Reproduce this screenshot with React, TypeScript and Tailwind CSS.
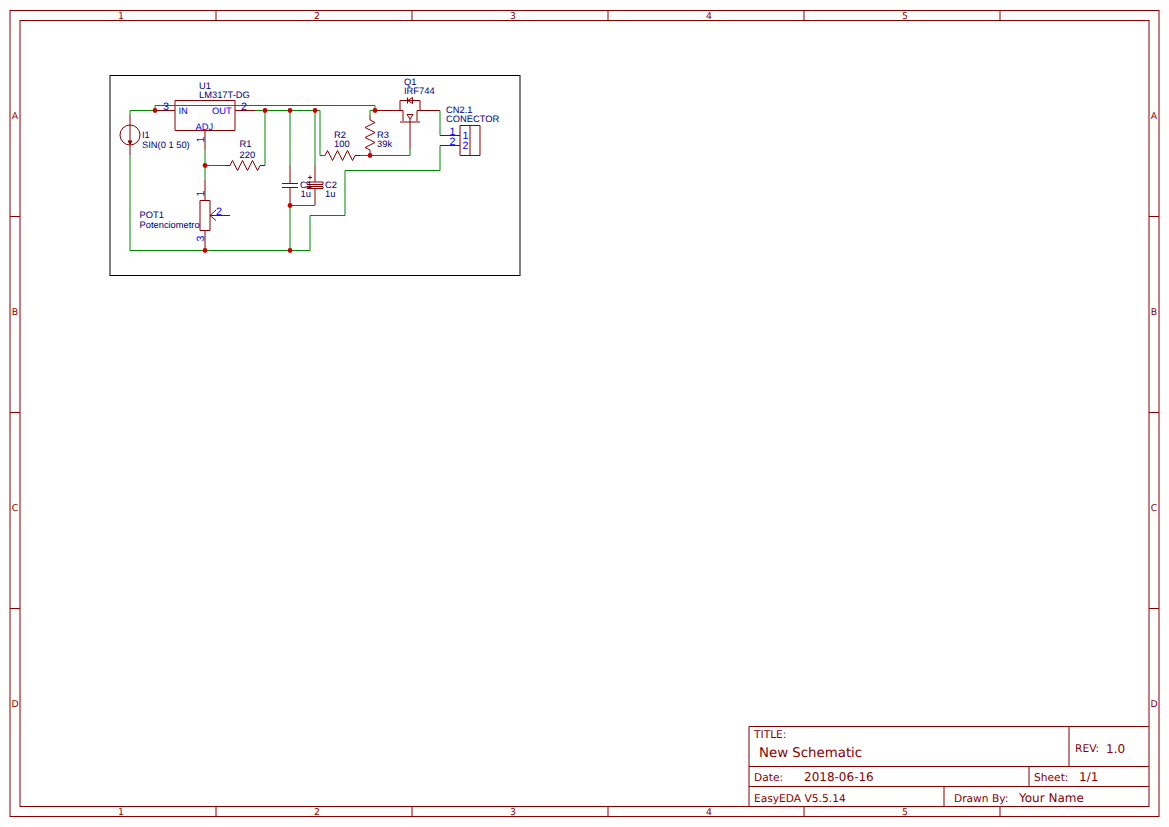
const wires = [
  'M130,115 V110.5 H155',
  'M155,110 V105.5 H375 V110',
  'M255,110.5 H315',
  'M130,155 V250.5 H310 V215.5 H345 V170.5 H440 V145.5',
  'M265,110.5 V165.5',
  'M205,150 V180',
  'M205,165.5 H225',
  'M290,110.5 V165',
  'M290,205 V250',
  'M290,205.5 H315',
  'M315,110.5 V165',
  'M315,110.5 H320 V155.5 H325',
  'M360,155.5 H410 V150',
  'M375,110.5 H370 V115',
  'M440,110.5 V135.5',
]

const parts = [
  // current source
  'M130,115 V155',
  // U1
  'M155,110.5 H175',
  'M235,110.5 H255',
  'M205,130 V150',
  'M175,100.5 H235 V130.5 H175 Z',
  // R1, R2, R3
  'M225,165.5 H230 L232.5,160.5 L237.5,170.5 L242.5,160.5 L247.5,170.5 L252.5,160.5 L257.5,170.5 L260,165.5 H265',
  'M320,155.5 H325 L327.5,150.5 L332.5,160.5 L337.5,150.5 L342.5,160.5 L347.5,150.5 L352.5,160.5 L355,155.5 H360',
  'M370,115 V120 L375,122.5 L365,127.5 L375,132.5 L365,137.5 L375,142.5 L365,147.5 L370,150 V155',
  // POT1
  'M205,180 V200',
  'M205,230 V250',
  'M200,200.5 H210 V230.5 H200 Z',
  'M230,215.5 H210 M216,210 L210,215.5 L216,220.5',
  // C1
  'M290,165 V183.5 M290,187.5 V205',
  'M282,183.5 H298 M282,187.5 H298',
  // C2
  'M315,165 V182 M315,188.5 V205',
  'M307,182 H323 V184.5 H307 Z M307,186.5 H323 V188.5 H307 Z',
  'M308,177.5 H312 M310,175.5 V179.5',
  // Q1
  'M375,110.5 H403 V121 M417,121 V110.5 H440',
  'M400,110.5 V100.5 H420 V110.5',
  'M400,122 H420',
  'M407,114.5 H413 L410,119 Z M410,119 V122 M410,122 V150',
  'M407.5,97.5 V103.5 M407.5,100.5 L412.5,97.5 V103.5 Z',
  // connector
  'M440,135.5 H460 M440,145.5 H460',
  'M460,125.5 H480 V155.5 H460 Z M470,125.5 V155.5',
]

const junctions = [
  [155, 110.5], [265, 110.5], [290, 110.5], [315, 110.5], [375, 110.5],
  [205, 165.5], [370, 155.5], [290, 205.5], [205, 250.5], [290, 250.5],
]

const labels: [string, number, number][] = [
  ['U1', 199, 89], ['LM317T-DG', 199, 98],
  ['I1', 142, 138], ['SIN(0 1 50)', 142, 148],
  ['R1', 239.5, 147], ['220', 239.5, 158],
  ['POT1', 139.5, 218], ['Potenciometro', 139.5, 228],
  ['C1', 300, 188], ['1u', 300.5, 197],
  ['C2', 325, 188], ['1u', 325, 197],
  ['R2', 334, 138], ['100', 334, 147],
  ['R3', 377, 138], ['39k', 377, 147],
  ['Q1', 404, 85], ['IRF744', 404, 94],
  ['CN2.1', 446, 113], ['CONECTOR', 446, 122],
]

const pinLabels: [string, number, number][] = [
  ['IN', 178.5, 113.5], ['OUT', 212, 113.5], ['ADJ', 195.5, 130],
]

const pinNumbers: [string, number, number][] = [
  ['3', 163, 109.5], ['2', 241, 109.5], ['2', 216, 215],
  ['1', 449.5, 134.5], ['2', 449.5, 144.5], ['1', 462.5, 138.5], ['2', 462.5, 148.5],
]

const rotatedPins: [string, number, number][] = [
  ['1', 204, 142.5], ['1', 204, 196.5], ['3', 204, 241.5],
]

const titleText: [string, number, number, string][] = [
  ['TITLE:', 754, 738, 'text-[10.67px]'],
  ['New Schematic', 759, 757, 'text-[13.33px]'],
  ['REV:', 1075, 752, 'text-[10.67px]'],
  ['1.0', 1106, 753, 'text-[12px]'],
  ['Date:', 754, 781, 'text-[10.67px]'],
  ['2018-06-16', 804, 781, 'text-[12px]'],
  ['Sheet:', 1034, 781, 'text-[10.67px]'],
  ['1/1', 1079, 781, 'text-[12px]'],
  ['EasyEDA V5.5.14', 754, 802, 'text-[10.67px]'],
  ['Drawn By:', 954, 802, 'text-[10.67px]'],
  ['Your Name', 1019, 802, 'text-[12px]'],
]

const columns = [121, 317, 513, 709, 905]
const rows = [115, 311, 507, 703]
const colTicks = [216, 412, 608, 804, 1000]
const rowTicks = [216.5, 412.5, 608.5]

function SheetFrame() {
  return (
    <g>
      <g className="fill-none stroke-[#880000]">
        <rect x={10} y={10.5} width={1149} height={806} />
        <rect x={20} y={20.5} width={1129} height={786} />
        {colTicks.map((x) => (
          <g key={x}>
            <path d={`M${x},10.5 V20.5`} />
            <path d={`M${x},806.5 V816.5`} />
          </g>
        ))}
        {rowTicks.map((y) => (
          <g key={y}>
            <path d={`M10,${y} H20`} />
            <path d={`M1149,${y} H1159`} />
          </g>
        ))}
        {/* title block */}
        <path d="M749,806.5 V726.5 H1149 M749,766.5 H1149 M749,786.5 H1149 M1069,726.5 V766.5 M1029,766.5 V786.5 M944,786.5 V806.5" />
      </g>
      <g className="fill-[#880000] font-['DejaVu_Sans',sans-serif] text-[9.33px]">
        {columns.map((x, i) => (
          <g key={x}>
            <text x={x} y={18.5} textAnchor="middle">{i + 1}</text>
            <text x={x} y={815} textAnchor="middle">{i + 1}</text>
          </g>
        ))}
        {rows.map((y, i) => (
          <g key={y}>
            <text x={15} y={y + 4} textAnchor="middle">{'ABCD'[i]}</text>
            <text x={1154} y={y + 4} textAnchor="middle">{'ABCD'[i]}</text>
          </g>
        ))}
        {titleText.map(([t, x, y, size]) => (
          <text key={t} x={x} y={y} className={size}>{t}</text>
        ))}
      </g>
    </g>
  )
}

function Circuit() {
  return (
    <g>
      <rect x={110} y={75.5} width={410} height={200} className="fill-none stroke-black" />
      <g className="fill-none stroke-[#880000]">
        {parts.map((d) => <path key={d} d={d} />)}
        <circle cx={130} cy={135} r={10} />
      </g>
      <g className="fill-none stroke-[#008800]">
        {wires.map((d) => <path key={d} d={d} />)}
      </g>
      {/* arrow of the current source */}
      <path d="M128,141 H132 L130,144 Z" className="fill-[#880000] stroke-[#880000]" />
      <g className="font-['Liberation_Sans',sans-serif] text-[9.33px]">
        {labels.map(([t, x, y]) => (
          <text key={t + x} x={x} y={y} className="fill-[#000080]">{t}</text>
        ))}
        {pinLabels.map(([t, x, y]) => (
          <text key={t} x={x} y={y} className="fill-[#0000ff]">{t}</text>
        ))}
        {pinNumbers.map(([t, x, y]) => (
          <text key={t + x + y} x={x} y={y} className="fill-[#0000ff] text-[10.67px]">{t}</text>
        ))}
        {rotatedPins.map(([t, x, y]) => (
          <text key={t + y} x={x} y={y} transform={`rotate(-90 ${x} ${y})`} className="fill-[#0000ff] text-[10.67px]">{t}</text>
        ))}
      </g>
      <g className="fill-[#cc0000]">
        {junctions.map(([x, y]) => <circle key={`${x}-${y}`} cx={x} cy={y} r={2.4} />)}
      </g>
    </g>
  )
}

export default function App() {
  return (
    <div className="w-[1169px] h-[827px] bg-white overflow-hidden">
      <svg width={1169} height={827} className="block [text-rendering:geometricPrecision]">
        <SheetFrame />
        <Circuit />
      </svg>
    </div>
  )
}
